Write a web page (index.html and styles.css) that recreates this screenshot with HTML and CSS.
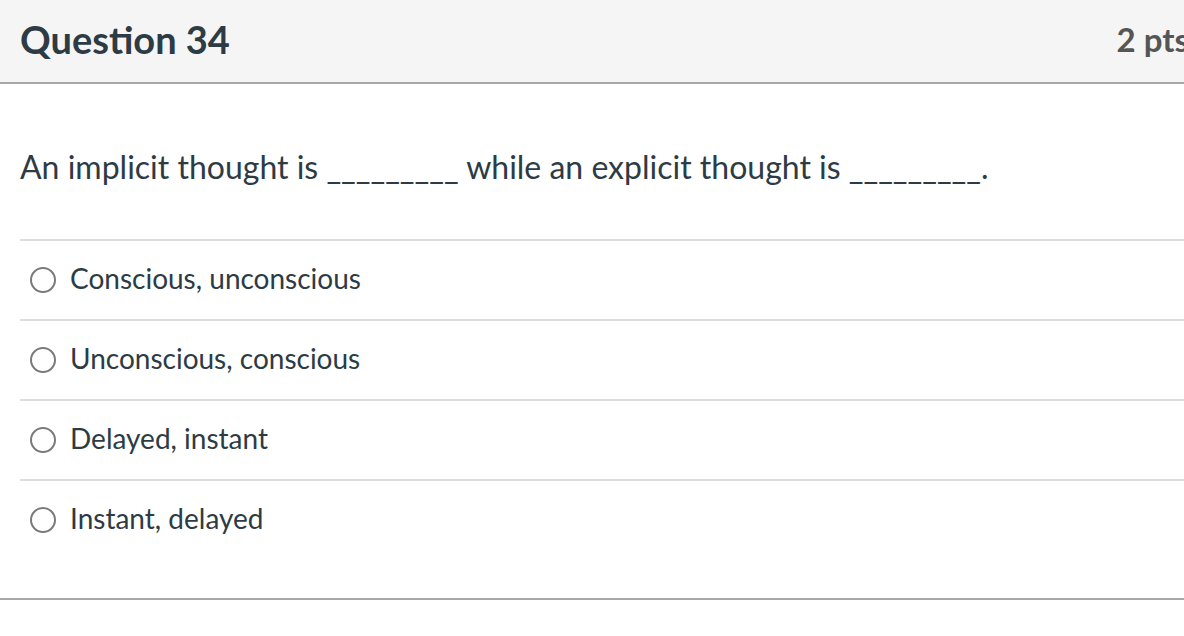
FILE: index.html
```html
<!DOCTYPE html>
<html lang="en">
<head>
<meta charset="utf-8">
<title>Question 34</title>
<link rel="stylesheet" href="styles.css">
</head>
<body>
<div class="question">
  <div class="header">
    <h2 class="title">Question 34</h2>
    <span class="pts">2 pts</span>
  </div>
  <div class="content">
    <p class="text">An implicit thought is _________ while an explicit thought is _________.</p>
    <ul class="answers">
      <li class="answer"><span class="radio"></span><span class="label">Conscious, unconscious</span></li>
      <li class="answer"><span class="radio"></span><span class="label">Unconscious, conscious</span></li>
      <li class="answer"><span class="radio"></span><span class="label">Delayed, instant</span></li>
      <li class="answer"><span class="radio"></span><span class="label">Instant, delayed</span></li>
    </ul>
  </div>
</div>
</body>
</html>
```
FILE: styles.css
```css
html, body {
  margin: 0;
  padding: 0;
  background: #ffffff;
  overflow: hidden;
}
body {
  font-family: Lato, "Open Sans", sans-serif;
  color: #2d3b45;
}
.question {
  width: 1209px;
  border-bottom: 2px solid #a8a8a8;
}
.header {
  background: #f5f5f5;
  border-bottom: 2px solid #a8a8a8;
  display: flex;
  align-items: center;
  justify-content: space-between;
  padding: 0 20px 4px 20px;
  box-sizing: border-box;
  height: 84px;
}
.title {
  margin: 0;
  font-size: 38px;
  font-weight: 700;
  color: #2d3b45;
}
.pts {
  font-size: 33px;
  font-weight: 700;
  color: #555555;
}
.content {
  padding: 0 0 39px 20px;
}
.text {
  margin: 0;
  height: 155px;
  display: flex;
  align-items: center;
  font-size: 32px;
  padding-top: 10px;
  box-sizing: border-box;
}
.answers {
  list-style: none;
  margin: 0;
  padding: 0;
}
.answer {
  height: 80px;
  box-sizing: border-box;
  border-top: 2px solid #dddddd;
  display: flex;
  align-items: center;
  gap: 14px;
  padding-left: 10px;
  padding-bottom: 4px;
}
.radio {
  width: 22px;
  height: 22px;
  border: 2px solid #7a7a7a;
  border-radius: 50%;
  flex: none;
  margin-top: 4px;
}
.label {
  font-size: 28px;
}
```
